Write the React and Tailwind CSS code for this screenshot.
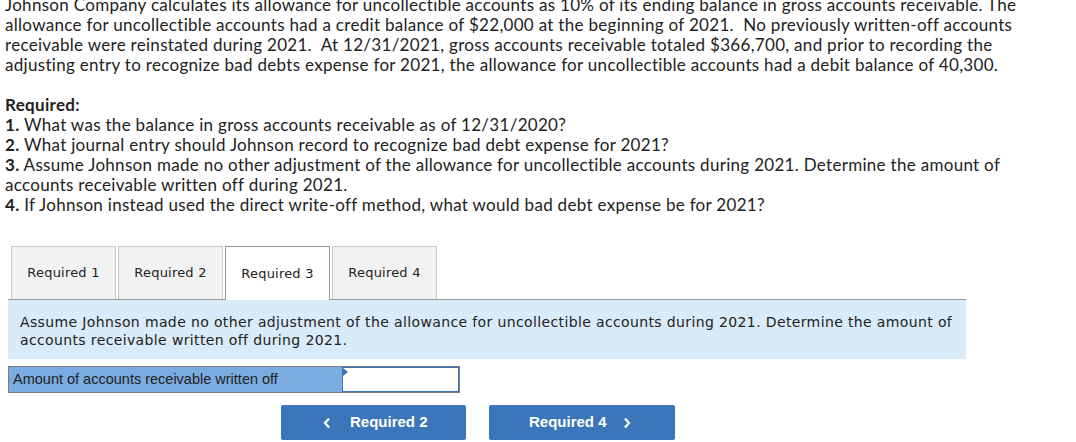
import React from "react";

const tabs = ["Required 1", "Required 2", "Required 3", "Required 4"];

function Chevron({ dir }) {
  return (
    <svg width="8" height="12" viewBox="0 0 8 12" className="shrink-0">
      <path
        d={dir === "left" ? "M6 1.5 L2 6 L6 10.5" : "M2 1.5 L6 6 L2 10.5"}
        fill="none"
        stroke="white"
        strokeWidth="2.2"
      />
    </svg>
  );
}

export default function App() {
  return (
    <div className="w-[1076px] h-[442px] overflow-hidden bg-white text-[#222]">
      <div className="px-[5px] -mt-[5px] text-[17px] leading-[20px] tracking-[0.3px] font-['Lato',sans-serif]">
        <p className="whitespace-pre">Johnson Company calculates its allowance for uncollectible accounts as 10% of its ending balance in gross accounts receivable. The</p>
        <p className="whitespace-pre">allowance for uncollectible accounts had a credit balance of $22,000 at the beginning of 2021.  No previously written-off accounts</p>
        <p className="whitespace-pre">receivable were reinstated during 2021.  At 12/31/2021, gross accounts receivable totaled $366,700, and prior to recording the</p>
        <p className="whitespace-pre">adjusting entry to recognize bad debts expense for 2021, the allowance for uncollectible accounts had a debit balance of 40,300.</p>
        <div className="h-[20px]" />
        <p className="font-bold">Required:</p>
        <p><b>1.</b> What was the balance in gross accounts receivable as of 12/31/2020?</p>
        <p><b>2.</b> What journal entry should Johnson record to recognize bad debt expense for 2021?</p>
        <p><b>3.</b> Assume Johnson made no other adjustment of the allowance for uncollectible accounts during 2021. Determine the amount of</p>
        <p>accounts receivable written off during 2021.</p>
        <p><b>4.</b> If Johnson instead used the direct write-off method, what would bad debt expense be for 2021?</p>
      </div>

      <div className="mt-[31px] ml-[8px] w-[958px]">
        <div className="flex gap-[2px] pl-[3px] border-b border-[#999] font-['DejaVu_Sans',sans-serif] text-[13px] tracking-[0.2px] text-[#222]">
          {tabs.map((t, i) => (
            <div
              key={t}
              className={
                i === 2
                  ? "w-[105px] h-[54px] -mb-px flex items-center justify-center bg-white border border-b-0 border-[#999]"
                  : "w-[105px] h-[53px] flex items-center justify-center bg-[#f2f2f2] border border-b-0 border-[#c8c8c8]"
              }
            >
              {t}
            </div>
          ))}
        </div>
        <div className="bg-[#d9eaf8] px-[12px] pt-[13px] pb-[10px] font-['DejaVu_Sans',sans-serif] text-[14px] leading-[18px] tracking-[0.37px] text-[#222]">
          <p className="whitespace-nowrap">Assume Johnson made no other adjustment of the allowance for uncollectible accounts during 2021. Determine the amount of</p>
          <p>accounts receivable written off during 2021.</p>
        </div>

        <div className="mt-[7px] w-[452px] h-[27px] flex border border-[#7a7a7a]">
          <div className="w-[333px] bg-[#7aace2] flex items-center pl-[4px] font-['Liberation_Sans',sans-serif] text-[14.5px] text-[#222] whitespace-nowrap">
            Amount of accounts receivable written off
          </div>
          <div className="relative flex-1 bg-white border border-[#3b73b9]">
            <span className="absolute left-0 top-0 w-0 h-0 border-t-[4px] border-b-[4px] border-l-[5px] border-t-transparent border-b-transparent border-l-[#3b73b9]" />
          </div>
        </div>

        <div className="mt-[12px] pl-[273px] flex gap-[23px] font-['Liberation_Sans',sans-serif] font-bold text-[15px] text-white">
          <div className="w-[185px] h-[35px] rounded-[2px] bg-[#3a76b9] flex items-center pl-[42px] gap-[19px]">
            <Chevron dir="left" />
            <span>Required 2</span>
          </div>
          <div className="w-[186px] h-[35px] rounded-[2px] bg-[#3a76b9] flex items-center pl-[40px] gap-[16px]">
            <span>Required 4</span>
            <Chevron dir="right" />
          </div>
        </div>
      </div>
    </div>
  );
}
